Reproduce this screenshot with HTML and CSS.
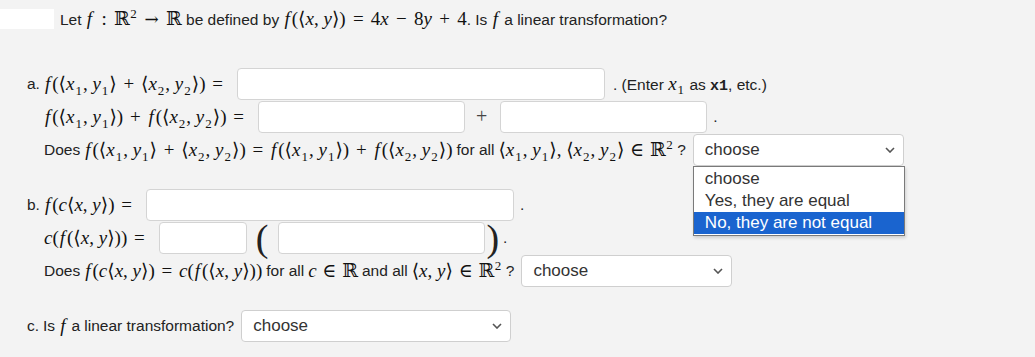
FILE: index.html
```html
<!DOCTYPE html>
<html lang="en">
<head>
    <meta charset="UTF-8">
    <title>Linear transformation question</title>
    <link rel="stylesheet" href="styles.css">
</head>
<body>

<div class="blank-tab"></div>

<p class="intro">
    Let <span class="m"><i class="fn">f</i> <span class="op">:</span> ℝ<sup>2</sup> <span class="op arrow">→</span> ℝ</span>
    be defined by
    <span class="m"><i class="fn">f</i>(⟨<i>x</i>, <i>y</i>⟩) <span class="op">=</span> 4<i>x</i> <span class="op">−</span> 8<i>y</i> <span class="op">+</span> 4</span>.
    Is <span class="m"><i class="fn">f</i></span> a linear transformation?
</p>

<div class="part">
    <div class="row">
        <span class="label">a.</span>
        <span class="m"><i class="fn">f</i>(⟨<i>x</i><sub>1</sub>, <i>y</i><sub>1</sub>⟩ <span class="op">+</span> ⟨<i>x</i><sub>2</sub>, <i>y</i><sub>2</sub>⟩) <span class="op">=</span></span>
        <span class="field w-367"></span>
        <span class="note">. (Enter <span class="m"><i>x</i><sub>1</sub></span> as <b class="code">x1</b>, etc.)</span>
    </div>
    <div class="row indent">
        <span class="m"><i class="fn">f</i>(⟨<i>x</i><sub>1</sub>, <i>y</i><sub>1</sub>⟩) <span class="op">+</span> <i class="fn">f</i>(⟨<i>x</i><sub>2</sub>, <i>y</i><sub>2</sub>⟩) <span class="op">=</span></span>
        <span class="field w-206"></span>
        <span class="plus">+</span>
        <span class="field w-206"></span>
        <span class="dot">.</span>
    </div>
    <div class="row indent">
        Does
        <span class="m"><i class="fn">f</i>(⟨<i>x</i><sub>1</sub>, <i>y</i><sub>1</sub>⟩ <span class="op">+</span> ⟨<i>x</i><sub>2</sub>, <i>y</i><sub>2</sub>⟩) <span class="op">=</span> <i class="fn">f</i>(⟨<i>x</i><sub>1</sub>, <i>y</i><sub>1</sub>⟩) <span class="op">+</span> <i class="fn">f</i>(⟨<i>x</i><sub>2</sub>, <i>y</i><sub>2</sub>⟩)</span>
        for all
        <span class="m">⟨<i>x</i><sub>1</sub>, <i>y</i><sub>1</sub>⟩, ⟨<i>x</i><sub>2</sub>, <i>y</i><sub>2</sub>⟩ <span class="op in">∈</span> ℝ<sup>2</sup></span>?
        <span class="select-wrap">
            <span class="select w-211">choose
                <svg class="chev" width="10" height="6" viewBox="0 0 10 6"><path d="M1 1l4 4 4-4" fill="none" stroke="#555" stroke-width="1.6"/></svg>
            </span>
            <span class="menu">
                <span class="opt">choose</span>
                <span class="opt">Yes, they are equal</span>
                <span class="opt active">No, they are not equal</span>
            </span>
        </span>
    </div>
</div>

<div class="part">
    <div class="row">
        <span class="label">b.</span>
        <span class="m"><i class="fn">f</i>(<i>c</i>⟨<i>x</i>, <i>y</i>⟩) <span class="op">=</span></span>
        <span class="field w-367"></span>
        <span class="dot">.</span>
    </div>
    <div class="row indent">
        <span class="m"><i>c</i>(<i class="fn">f</i>(⟨<i>x</i>, <i>y</i>⟩)) <span class="op">=</span></span>
        <span class="field w-88"></span>
        <span class="paren">(</span>
        <span class="field w-207"></span>
        <span class="paren close">)</span><span class="dot">.</span>
    </div>
    <div class="row indent">
        Does
        <span class="m"><i class="fn">f</i>(<i>c</i>⟨<i>x</i>, <i>y</i>⟩) <span class="op">=</span> <i>c</i>(<i class="fn">f</i>(⟨<i>x</i>, <i>y</i>⟩))</span>
        for all <span class="m"><i>c</i> <span class="op in">∈</span> ℝ</span> and all
        <span class="m">⟨<i>x</i>, <i>y</i>⟩ <span class="op in">∈</span> ℝ<sup>2</sup></span>?
        <span class="select w-211">choose
            <svg class="chev" width="10" height="6" viewBox="0 0 10 6"><path d="M1 1l4 4 4-4" fill="none" stroke="#555" stroke-width="1.6"/></svg>
        </span>
    </div>
</div>

<div class="part">
    <div class="row">
        <span class="label">c.</span>
        Is <span class="m"><i class="fn">f</i></span> a linear transformation?
        <span class="select w-270">choose
            <svg class="chev" width="10" height="6" viewBox="0 0 10 6"><path d="M1 1l4 4 4-4" fill="none" stroke="#555" stroke-width="1.6"/></svg>
        </span>
    </div>
</div>

</body>
</html>
```

FILE: styles.css
```css
body {
    margin: 0;
    background-color: #f3f3f3;
    color: #222;
    font-family: 'Liberation Sans', Arial, sans-serif;
    font-size: 15.5px;
}
.blank-tab {
    position: absolute;
    left: 0;
    top: 9px;
    width: 54px;
    height: 20px;
    background-color: #fff;
}
.intro {
    margin: 0;
    padding: 8px 0 0 60px;
    line-height: 22px;
    white-space: nowrap;
}
.m {
    font-family: 'Liberation Serif', 'DejaVu Serif', serif;
    font-size: 19px;
    color: #111;
    white-space: nowrap;
}
.m i {
    font-style: italic;
}
.m i.fn {
    margin: 0 2px 0 1px;
}
.m sub {
    font-size: 13px;
    line-height: 0;
    margin: 0 1px;
}
.m sup {
    font-size: 13px;
    line-height: 0;
    margin: 0 0.5px;
}
.op {
    margin: 0 2px;
}
.intro .op {
    margin: 0 2.5px;
}
.op.in {
    margin: 0 1px;
}
.arrow {
    font-family: 'DejaVu Serif', serif;
    font-size: 17px;
}
.part {
    padding-left: 27px;
    margin-top: 36px;
}
.part + .part {
    margin-top: 22px;
}
.row {
    display: flex;
    align-items: center;
    gap: 4px;
    height: 33px;
    white-space: nowrap;
}
.row.indent {
    padding-left: 17px;
}
.field {
    display: inline-block;
    height: 32px;
    box-sizing: border-box;
    background-color: #fff;
    border: 1px solid #d4d4d4;
    border-radius: 4px;
    margin-left: 8px;
}
.plus + .field,
.paren + .field {
    margin-left: 0;
}
.w-367 { width: 368px; }
.w-206 { width: 207px; }
.w-207 { width: 207px; }
.w-88 { width: 88px; }
.w-211 { width: 211px; }
.w-270 { width: 270px; }
.note {
    margin-left: 4px;
}
.code {
    font-family: 'Liberation Mono', 'DejaVu Sans Mono', monospace;
    font-size: 15px;
}
.plus {
    font-family: 'Liberation Serif', serif;
    font-size: 20px;
    color: #444;
    margin: 0 9px 0 7px;
}
.dot {
    margin-left: 2px;
}
.paren {
    font-family: 'Liberation Serif', serif;
    font-size: 38px;
    line-height: 32px;
    color: #222;
    margin: 0 6px 0 5px;
}
.paren.close {
    margin: 0 0 0 -3px;
}
.paren + .dot {
    margin-left: 0;
}
.select-wrap {
    position: relative;
    margin-left: 3px;
}
.select {
    display: inline-flex;
    align-items: center;
    justify-content: space-between;
    height: 32px;
    box-sizing: border-box;
    padding: 0 8px 0 11px;
    background-color: #fff;
    border: 1px solid #cfcfcf;
    border-radius: 4px;
    font-size: 17px;
    color: #333;
    margin-left: 3px;
}
.select-wrap .select {
    margin-left: 0;
}
.menu {
    position: absolute;
    left: 0;
    top: 32px;
    width: 212px;
    box-sizing: border-box;
    background-color: #fff;
    border: 1px solid #7a7a7a;
    box-shadow: 1px 2px 3px rgba(0,0,0,0.15);
    display: flex;
    flex-direction: column;
    padding-top: 1px;
}
.opt {
    height: 22px;
    line-height: 22px;
    padding-left: 11px;
    font-size: 17px;
    color: #333;
}
.opt.active {
    background-color: #1a64cf;
    color: #fff;
    margin-bottom: 1px;
}
```
